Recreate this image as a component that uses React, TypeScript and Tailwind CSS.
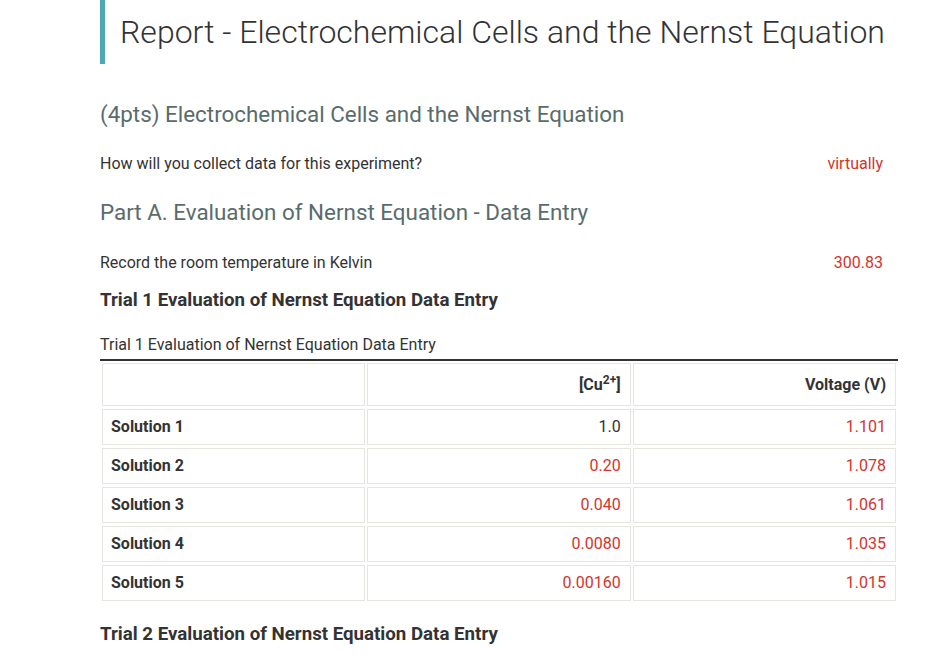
import React from "react";

const red = "text-[#d3342c]";

function Row({ label, values, header = false }: { label: string; values: { v: React.ReactNode; red?: boolean }[]; header?: boolean }) {
  return (
    <tr className={header ? "h-[43px]" : "h-[36px]"}>
      <td className="border border-[#e6e6e1] pl-[8px] pr-[9px] text-left font-bold text-[#333]">{label}</td>
      {values.map((c, i) => (
        <td
          key={i}
          className={`border border-[#e6e6e1] pl-[9px] pr-[9px] text-right ${header ? "font-bold text-[#333]" : c.red ? "text-[#d3342c]" : "text-[#333]"}`}
        >
          {c.v}
        </td>
      ))}
    </tr>
  );
}

export default function App() {
  return (
    <div className="min-h-[665px] w-[933px] bg-white" style={{ fontFamily: "Roboto, 'Liberation Sans', sans-serif" }}>
      <div className="ml-[100px] w-[798px] text-[#333]">
        <h1 className="flex h-[64px] items-center border-l-[5px] border-[#4fa7b4] pl-[15px] text-[32px] font-light leading-none text-[#333]">
          Report - Electrochemical Cells and the Nernst Equation
        </h1>

        <h2 className="mt-[36px] text-[22.4px] leading-[28px] font-normal text-[#596c6c]">
          (4pts) Electrochemical Cells and the Nernst Equation
        </h2>

        <div className="mt-[26px] flex justify-between pr-[15px] text-[16px] leading-[20px]">
          <span>How will you collect data for this experiment?</span>
          <span className={red}>virtually</span>
        </div>

        <h2 className="mt-[24px] text-[22.4px] leading-[28px] font-normal text-[#596c6c]">
          Part A. Evaluation of Nernst Equation - Data Entry
        </h2>

        <div className="mt-[27px] flex justify-between pr-[15px] text-[16px] leading-[20px]">
          <span>Record the room temperature in Kelvin</span>
          <span className={red}>300.83</span>
        </div>

        <h3 className="mt-[15px] text-[18.7px] leading-[24px] font-bold text-[#333]">
          Trial 1 Evaluation of Nernst Equation Data Entry
        </h3>

        <div className="mt-[23px] text-[16px] leading-[20px]">Trial 1 Evaluation of Nernst Equation Data Entry</div>

        <div className="mt-[4px] border-t-2 border-[#333]">
          <table className="w-full table-fixed border-separate border-spacing-x-[2px] border-spacing-y-[3px] text-[16px] -mt-[1px]">
            <tbody>
              <Row
                header
                label=""
                values={[
                  {
                    v: (
                      <span>
                        [Cu<sup className="text-[12px]">2+</sup>]
                      </span>
                    ),
                  },
                  { v: "Voltage (V)" },
                ]}
              />
              <Row label="Solution 1" values={[{ v: "1.0" }, { v: "1.101", red: true }]} />
              <Row label="Solution 2" values={[{ v: "0.20", red: true }, { v: "1.078", red: true }]} />
              <Row label="Solution 3" values={[{ v: "0.040", red: true }, { v: "1.061", red: true }]} />
              <Row label="Solution 4" values={[{ v: "0.0080", red: true }, { v: "1.035", red: true }]} />
              <Row label="Solution 5" values={[{ v: "0.00160", red: true }, { v: "1.015", red: true }]} />
            </tbody>
          </table>
        </div>

        <h3 className="mt-[18px] text-[18.7px] leading-[24px] font-bold text-[#333]">
          Trial 2 Evaluation of Nernst Equation Data Entry
        </h3>
      </div>
    </div>
  );
}
